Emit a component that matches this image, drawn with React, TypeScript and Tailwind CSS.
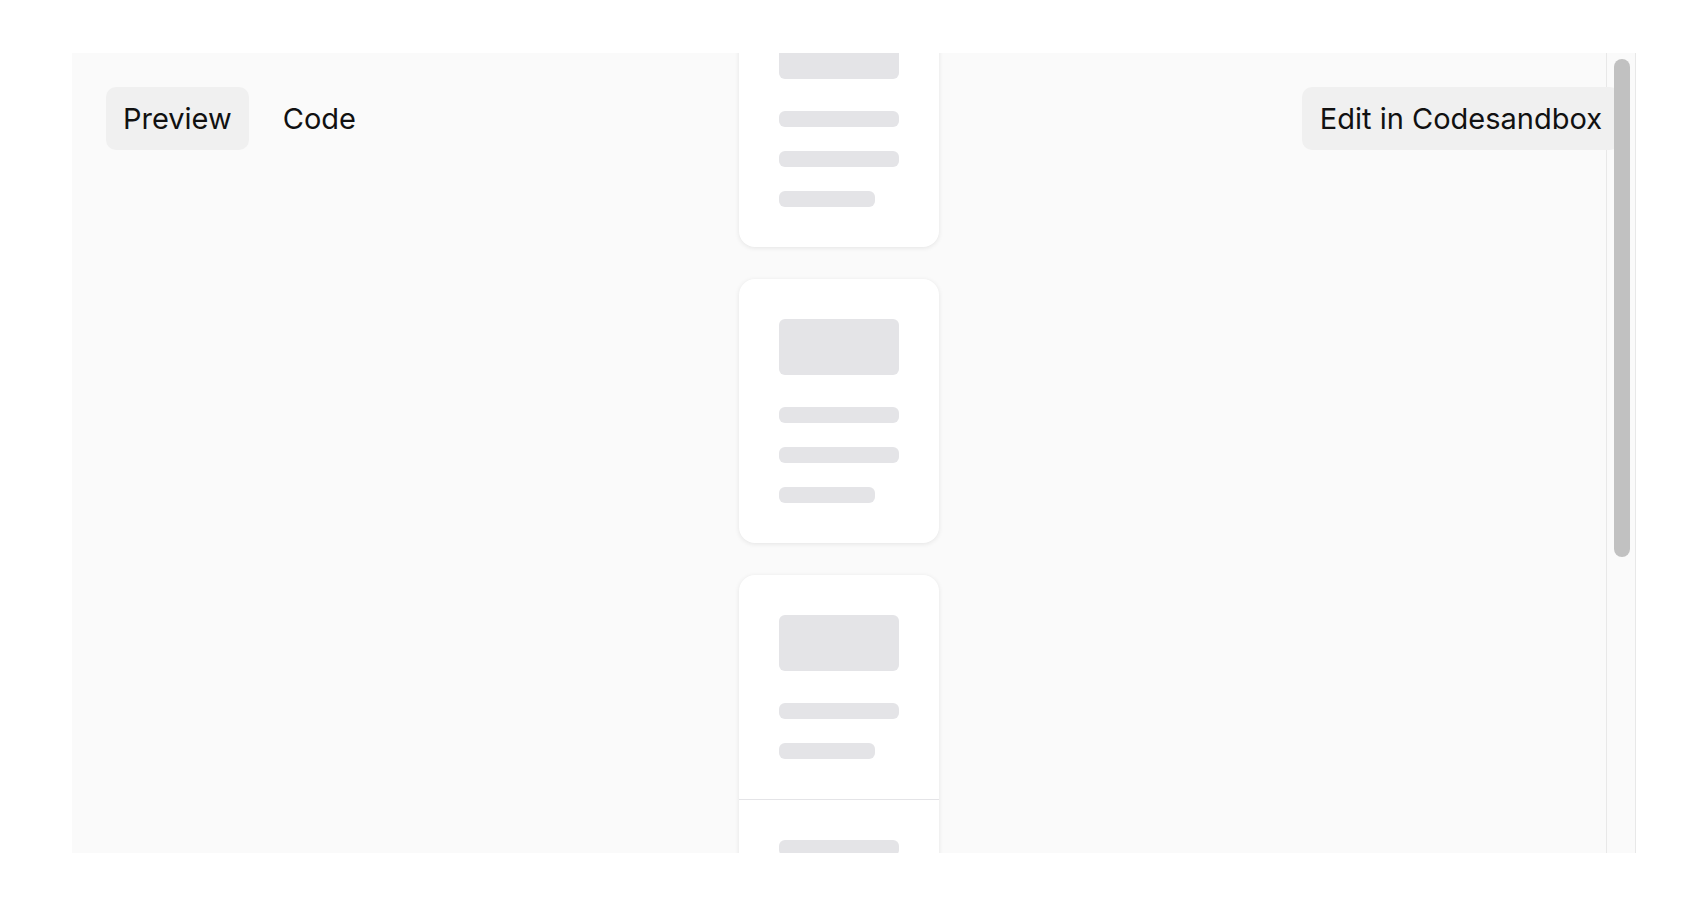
import React from 'react'

const Bar = ({ className }: { className: string }) => (
  <div className={`h-4 rounded-md bg-[#e4e4e7] ${className}`} />
)

const SkeletonBlock = ({ lines }: { lines: number }) => (
  <div className="flex flex-col">
    <div className="h-14 w-full rounded-md bg-[#e4e4e7]" />
    <div className="mt-8 flex flex-col gap-6">
      {Array.from({ length: lines - 1 }).map((_, i) => (
        <Bar key={i} className="w-full" />
      ))}
      <Bar className="w-24" />
    </div>
  </div>
)

const Card = ({ children }: { children: React.ReactNode }) => (
  <div className="w-[200px] overflow-hidden rounded-2xl bg-white shadow-[0_1px_5px_rgba(0,0,0,0.09)]">
    {children}
  </div>
)

export default function App() {
  return (
    <div
      className="min-h-[916px] bg-white pl-[72px] pr-[64px] pt-[53px]"
      style={{ fontFamily: 'Inter, "Noto Sans", sans-serif' }}
    >
      <div className="flex h-[800px] bg-[#fafafa]">
        {/* preview area */}
        <div className="relative flex-1 overflow-hidden">
          <div className="-mt-[70px] flex flex-col items-center gap-8">
            <Card>
              <div className="p-10">
                <SkeletonBlock lines={3} />
              </div>
            </Card>
            <Card>
              <div className="p-10">
                <SkeletonBlock lines={3} />
              </div>
            </Card>
            <Card>
              <div className="border-b border-[#e4e4e7] p-10">
                <SkeletonBlock lines={2} />
              </div>
              <div className="flex flex-col gap-6 p-10">
                <Bar className="w-full" />
                <Bar className="w-full" />
                <Bar className="w-24" />
              </div>
            </Card>
          </div>

          {/* toolbar */}
          <div className="absolute left-[34px] top-[34px] flex items-center gap-[17px]">
            <button className="flex h-[63px] items-center rounded-[10px] bg-[#f0f0f0] px-[17px] text-[29px] text-[#111]">
              Preview
            </button>
            <button className="flex h-[63px] items-center rounded-[10px] px-[17px] text-[29px] text-[#111]">
              Code
            </button>
          </div>
        </div>

        {/* scrollbar */}
        <div className="relative w-[30px] border-x border-[#e8e8e8]">
          <button className="absolute right-[15px] top-[34px] flex h-[63px] items-center whitespace-nowrap rounded-[10px] bg-[#f0f0f0] px-[18px] text-[29px] text-[#111]">
            Edit in Codesandbox
          </button>
          <div className="absolute left-[7px] top-[6px] z-10 h-[498px] w-4 rounded-full bg-[#c1c1c1]" />
        </div>
      </div>
    </div>
  )
}
